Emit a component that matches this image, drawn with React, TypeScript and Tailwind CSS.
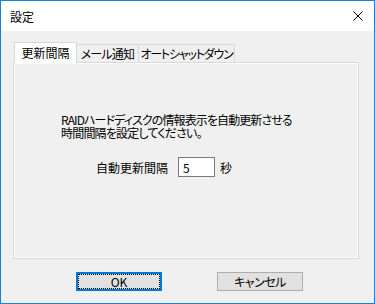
import React from 'react';

const font = "font-['Noto_Sans_CJK_JP',sans-serif] [font-feature-settings:'palt']";

export default function App() {
  return (
    <div className={`w-[375px] h-[304px] border border-[#1a7fd6] bg-[#f0f0f0] flex flex-col text-[12px] leading-[13px] text-black ${font}`}>
      {/* title bar */}
      <div className="h-[30px] bg-white flex items-center justify-between pl-[9px] pr-[11px] shrink-0">
        <span>設定</span>
        <svg width="10" height="10" viewBox="0 0 10 10" className="text-black">
          <path d="M0.5 0.5 L9.5 9.5 M9.5 0.5 L0.5 9.5" stroke="currentColor" strokeWidth="1" fill="none" />
        </svg>
      </div>

      <div className="flex flex-col pl-[12px] pr-[15px] pt-[11px]">
        {/* tabs */}
        <div className="flex items-end h-[21px] whitespace-nowrap">
          <div className="relative z-10 ml-px w-[63px] h-[21px] bg-white border-t border-l border-r border-[#d9d9d9] flex items-center justify-center pb-px">
            更新間隔
          </div>
          <div className="w-[62px] h-[19px] border-t border-r border-[#d9d9d9] flex items-center justify-center pb-px tracking-[-0.8px]">
            メール通知
          </div>
          <div className="w-[96px] h-[19px] border-t border-r border-[#d9d9d9] flex items-center justify-center pb-px tracking-[-1.2px]">
            オートシャットダウン
          </div>
        </div>

        {/* panel */}
        <div className="-mt-px h-[197px] border border-[#d9d9d9] shadow-[inset_0_0_0_1px_#ffffff] pl-[47px] pt-[50px]">
          <p className="whitespace-nowrap tracking-[-0.9px]">RAIDハードディスクの情報表示を自動更新させる</p>
          <p className="whitespace-nowrap tracking-[-0.8px]">時間間隔を設定してください。</p>
          <div className="flex items-center mt-[18px] ml-[35px]">
            <span>自動更新間隔</span>
            <div className="ml-[10px] w-[37px] h-[20px] border border-[#7a7a7a] bg-white flex items-center pl-[4px]">
              5
            </div>
            <span className="ml-[5px]">秒</span>
          </div>
        </div>

        {/* buttons */}
        <div className="flex mt-[13px]">
          <button className="ml-[63px] w-[86px] h-[19px] border-2 border-[#0078d7] bg-[#e1e1e1] p-0 flex">
            <span className="flex-1 border border-dotted border-black flex items-center justify-center">OK</span>
          </button>
          <button className="ml-[55px] w-[86px] h-[19px] border border-[#adadad] bg-[#e1e1e1] flex items-center justify-center tracking-[-0.5px]">
            キャンセル
          </button>
        </div>
      </div>
    </div>
  );
}
